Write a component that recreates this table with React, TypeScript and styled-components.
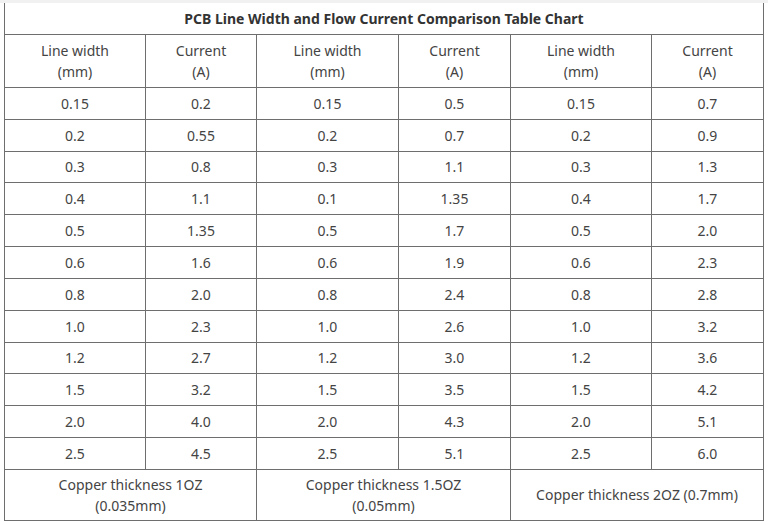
import React from "react";
import styled, { createGlobalStyle } from "styled-components";

const GlobalStyle = createGlobalStyle`
  body {
    margin: 0;
    background: #fff;
    font-family: "Noto Sans", "Open Sans", sans-serif;
  }
`;

const Page = styled.div`
  width: 768px;
  height: 525px;
  border-top: 3px solid #f1f1f1;
  box-sizing: border-box;
  padding-left: 4px;
`;

const Table = styled.table`
  border-collapse: collapse;
  table-layout: fixed;
  width: 759px;
  color: #444;
  font-size: 14px;
  td,
  th {
    border: 1px solid #6e6e6e;
    text-align: center;
    vertical-align: middle;
    padding: 0;
    line-height: 21px;
  }
`;

const TitleCell = styled.th`
  font-weight: 700;
  font-size: 14px;
  color: #333;
  && {
    border-top: none;
  }
`;

const Row = styled.tr<{ $h: number }>`
  height: ${(p) => p.$h}px;
`;

const HeadCell = styled.td`
  padding-top: 2px;
`;

const DataCell = styled.td``;

const FootCell = styled.td`
  padding-top: 2px;
`;

const widths = [141, 111, 142, 112, 141, 112];

const rows: string[][] = [
  ["0.15", "0.2", "0.15", "0.5", "0.15", "0.7"],
  ["0.2", "0.55", "0.2", "0.7", "0.2", "0.9"],
  ["0.3", "0.8", "0.3", "1.1", "0.3", "1.3"],
  ["0.4", "1.1", "0.1", "1.35", "0.4", "1.7"],
  ["0.5", "1.35", "0.5", "1.7", "0.5", "2.0"],
  ["0.6", "1.6", "0.6", "1.9", "0.6", "2.3"],
  ["0.8", "2.0", "0.8", "2.4", "0.8", "2.8"],
  ["1.0", "2.3", "1.0", "2.6", "1.0", "3.2"],
  ["1.2", "2.7", "1.2", "3.0", "1.2", "3.6"],
  ["1.5", "3.2", "1.5", "3.5", "1.5", "4.2"],
  ["2.0", "4.0", "2.0", "4.3", "2.0", "5.1"],
  ["2.5", "4.5", "2.5", "5.1", "2.5", "6.0"],
];

const rowHeights = [32, 32, 31, 32, 32, 32, 32, 32, 31, 32, 32, 32];

export default function App() {
  return (
    <Page>
      <GlobalStyle />
      <Table>
        <colgroup>
          {widths.map((w, i) => (
            <col key={i} style={{ width: w }} />
          ))}
        </colgroup>
        <thead>
          <Row $h={31}>
            <TitleCell colSpan={6}>
              PCB Line Width and Flow Current Comparison Table Chart
            </TitleCell>
          </Row>
        </thead>
        <tbody>
          <Row $h={53}>
            {[0, 1, 2].map((i) => (
              <React.Fragment key={i}>
                <HeadCell>
                  Line width
                  <br />
                  (mm)
                </HeadCell>
                <HeadCell>
                  Current
                  <br />
                  (A)
                </HeadCell>
              </React.Fragment>
            ))}
          </Row>
          {rows.map((r, i) => (
            <Row $h={rowHeights[i]} key={i}>
              {r.map((v, j) => (
                <DataCell key={j}>{v}</DataCell>
              ))}
            </Row>
          ))}
          <Row $h={51}>
            <FootCell colSpan={2}>
              Copper thickness 1OZ
              <br />
              (0.035mm)
            </FootCell>
            <FootCell colSpan={2}>
              Copper thickness 1.5OZ
              <br />
              (0.05mm)
            </FootCell>
            <FootCell colSpan={2}>Copper thickness 2OZ (0.7mm)</FootCell>
          </Row>
        </tbody>
      </Table>
    </Page>
  );
}
